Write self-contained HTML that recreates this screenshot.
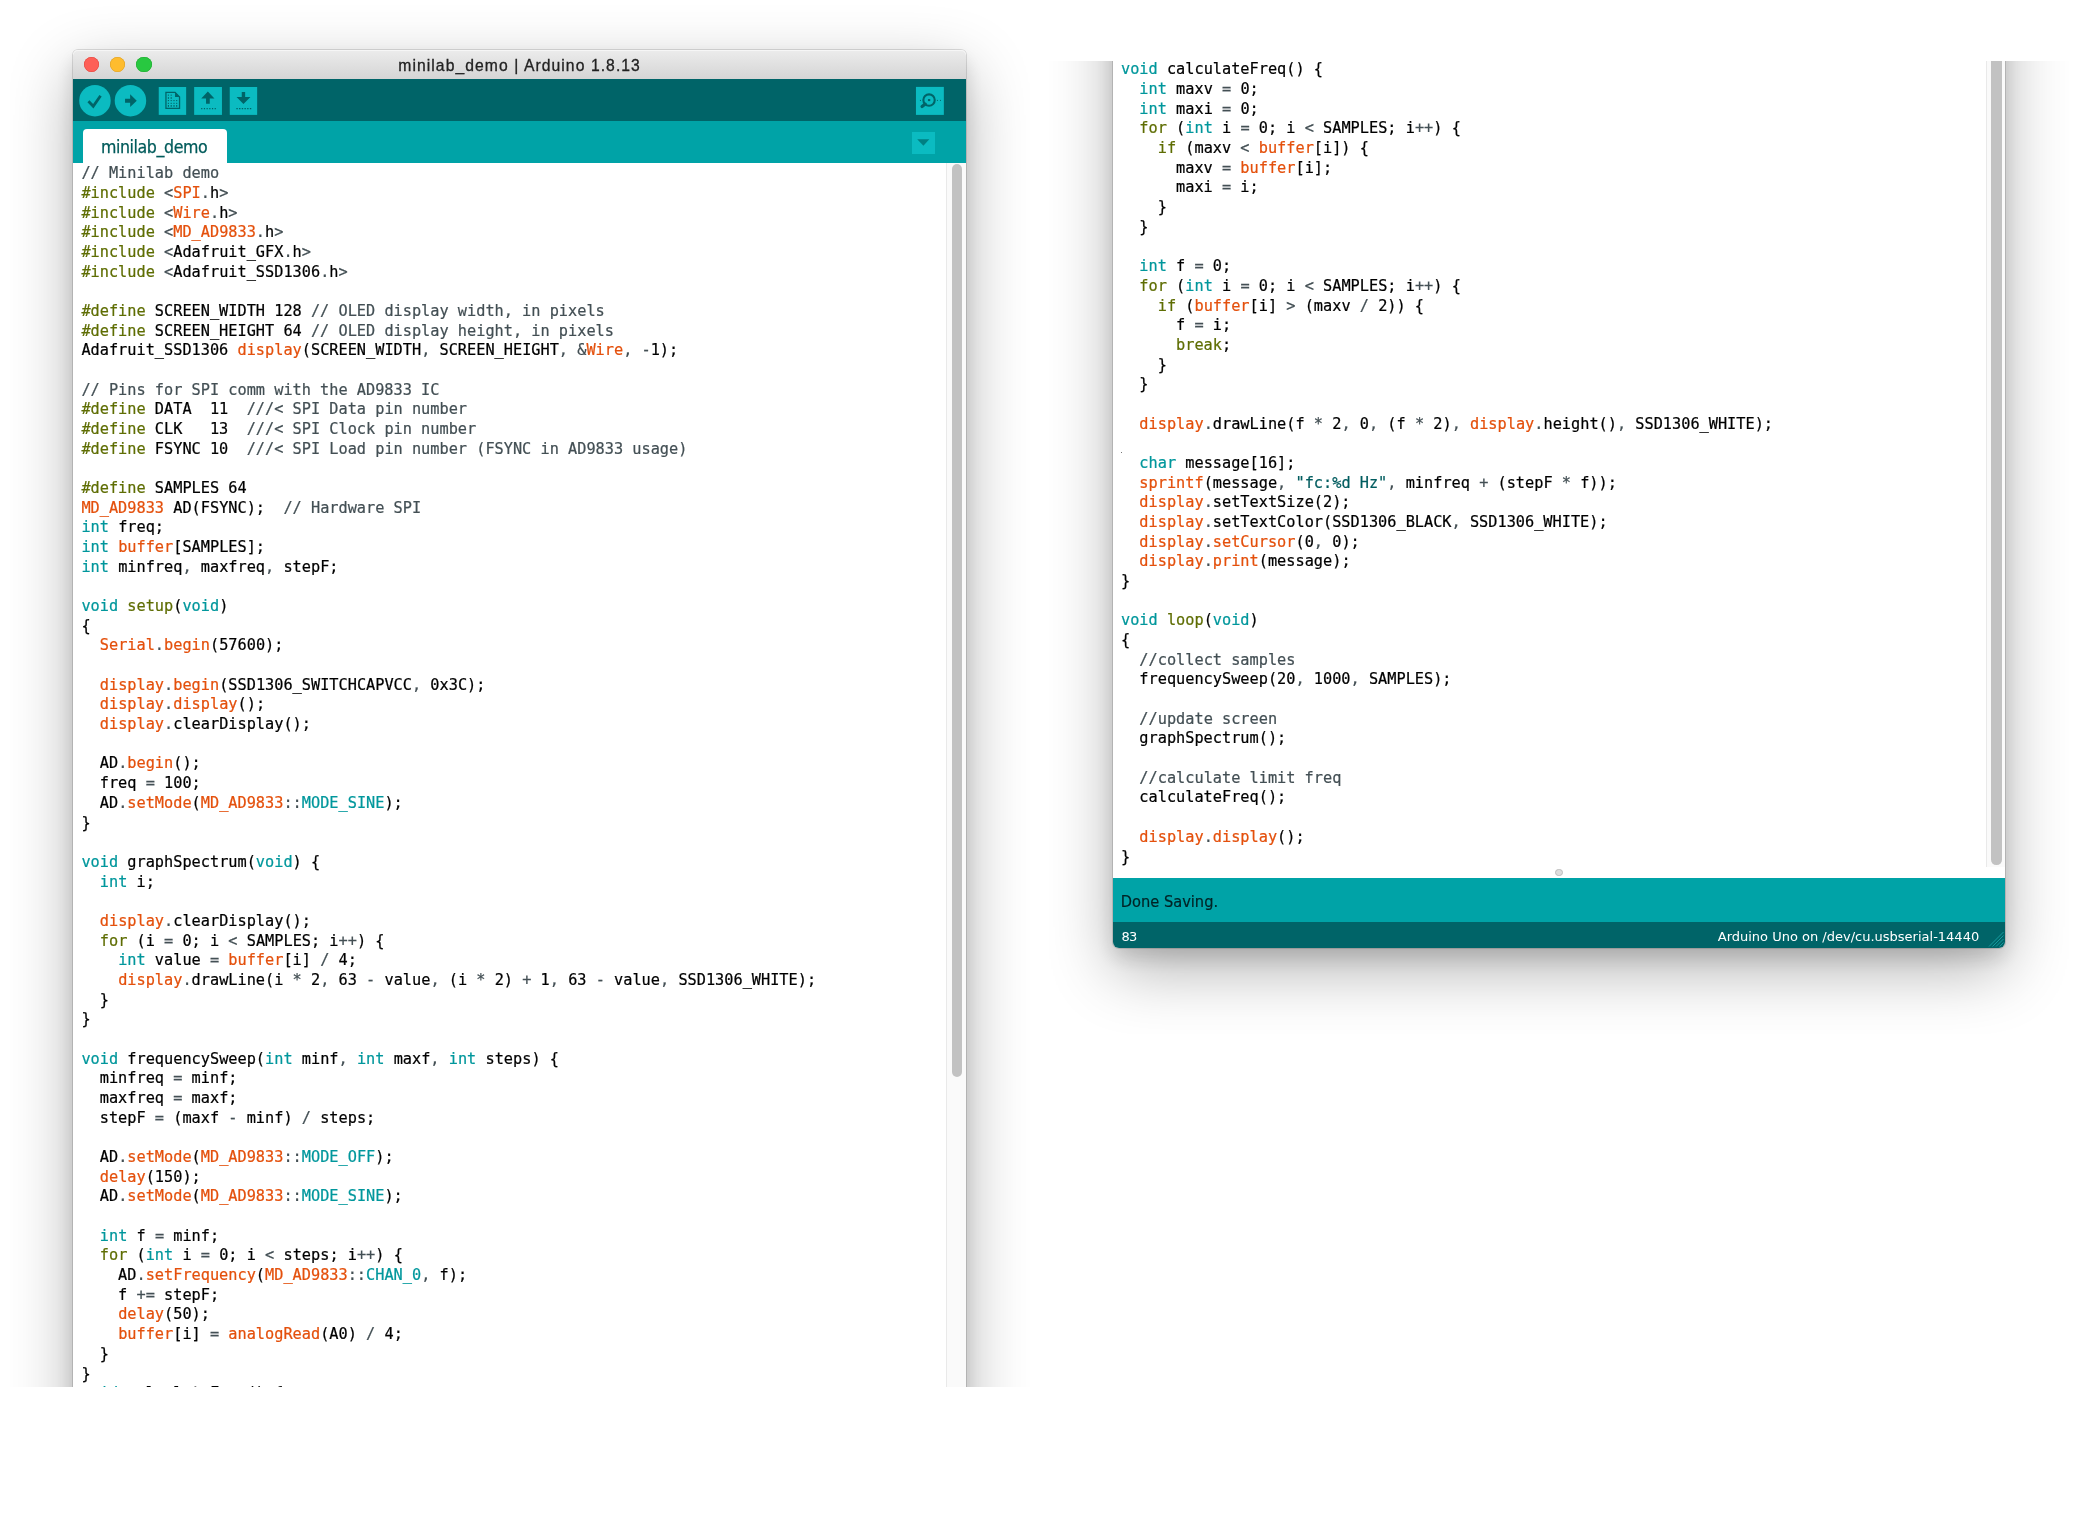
<!DOCTYPE html>
<html lang="en"><head><meta charset="utf-8"><title>minilab_demo | Arduino 1.8.13</title>
<style>
html,body{margin:0;padding:0;background:#fff}
body{width:2080px;height:1514px;position:relative;overflow:hidden;font-family:"Liberation Sans",sans-serif}
.img{position:absolute;overflow:hidden;will-change:transform}
.win{position:absolute;box-shadow:0 0 0 1px rgba(0,0,0,.13),0 10px 20px rgba(0,0,0,.13),0 22px 64px rgba(0,0,0,.30)}
.edbg{position:absolute;left:0;width:100%;background:#fff}
.abs{position:absolute}
.titlebar{position:absolute;left:0;top:0;width:100%;height:29.5px;border-radius:5px 5px 0 0;background:linear-gradient(#ececec,#d5d5d5);box-shadow:inset 0 1px 0 #f6f6f6}
.title{position:absolute;left:0;width:100%;text-align:center;top:6.4px;font-size:15.7px;letter-spacing:1.07px;line-height:20px;color:#222;white-space:pre;-webkit-text-stroke:.3px}
.dot{position:absolute;width:15.6px;height:15.6px;border-radius:50%;top:7.4px}
.toolbar{position:absolute;left:0;top:29.5px;width:100%;height:41.8px;background:#006468}
.tabbar{position:absolute;left:0;top:71.3px;width:100%;height:42.1px;background:#00a3a7}
.btn{position:absolute;background:#0bbbc1}
.tab{position:absolute;left:9.95px;top:8.3px;width:143.6px;height:40px;background:#fff;border-radius:4px 4px 0 0}
.tabtxt{position:absolute;left:-.7px;width:100%;text-align:center;top:7.7px;font-family:"DejaVu Sans Condensed","DejaVu Sans","Liberation Sans",sans-serif;font-size:17.6px;letter-spacing:-.4px;line-height:20px;color:#005b5b;white-space:pre;-webkit-text-stroke:.25px #005b5b}
.code{position:absolute;left:0;top:0;font-family:"DejaVu Sans Mono","Liberation Mono",monospace;font-size:15.265px;color:#000;-webkit-text-stroke:.22px}
.ln{position:absolute;white-space:pre;height:20px;line-height:20px}
.ln i{font-style:normal}
.c{color:#434f54}.g{color:#434f54}.p{color:#5e6d03}.o{color:#e4500c}.t{color:#00979c}.s{color:#005c5f}
.track{position:absolute;background:#fafafa;border-left:1px solid #e9e9e9;box-sizing:border-box}
.thumb{position:absolute;background:#c2c2c2;border-radius:5.2px}
.status{position:absolute;left:0;width:100%;background:#00a3a7}
.footer{position:absolute;left:0;width:100%;background:#006468;border-radius:0 0 5px 5px}
.sans{font-family:"DejaVu Sans Condensed","DejaVu Sans","Liberation Sans",sans-serif;white-space:pre;position:absolute}
.sans2{font-family:"DejaVu Sans","Liberation Sans",sans-serif;white-space:pre;position:absolute}

</style></head>
<body>
<!-- left screenshot -->
<div class="img" style="left:10px;top:0;width:1020px;height:1387px">
 <div class="win" style="left:63.05px;top:49.5px;width:893.1px;height:1600px;border-radius:5px">
  <div class="edbg" style="top:113px;height:1400px"></div>
  <div class="titlebar">
   <div class="dot" style="left:10.6px;background:#fe5f57;box-shadow:inset 0 0 0 .6px #e2463f"></div>
   <div class="dot" style="left:36.8px;background:#febc2e;box-shadow:inset 0 0 0 .6px #dfa023"></div>
   <div class="dot" style="left:63.1px;background:#28c840;box-shadow:inset 0 0 0 .6px #1fab2f"></div>
   <div class="title">minilab_demo | Arduino 1.8.13</div>
  </div>
  <div class="toolbar">
   <svg class="abs" style="left:0;top:0" width="893" height="42" viewBox="0 0 893 42">
    <g transform="translate(0.55 0)">
    <!-- verify -->
    <circle cx="21.4" cy="21.7" r="15.75" fill="#0bbbc1"/>
    <path d="M14.9 22.3 L19.7 27.3 L27 16.8" fill="none" stroke="#006468" stroke-width="2.8"/>
    <!-- upload -->
    <circle cx="56.9" cy="21.7" r="15.75" fill="#0bbbc1"/>
    <path d="M51.5 19.7 H56.6 V15.3 L63.2 21.7 L56.6 28.1 V23.7 H51.5 Z" fill="#006468"/>
    <!-- new -->
    <rect x="85.2" y="8" width="27.4" height="27.9" fill="#0bbbc1"/>
    <path d="M92.4 13.4 H101.5 L106 18 V29.3 H92.4 Z" fill="none" stroke="#006468" stroke-width="1.3"/>
    <path d="M101.5 13.4 L106 18 H101.5 Z" fill="#006468"/>
    <g fill="#006468">
     <rect x="94.3" y="15.6" width="1.1" height="1.1"/><rect x="97.1" y="15.6" width="1.1" height="1.1"/>
     <rect x="94.3" y="18.2" width="1.1" height="1.6"/><rect x="97.1" y="18.2" width="1.1" height="1.6"/>
     <rect x="94.3" y="21" width="1.1" height="1.1"/><rect x="97.1" y="21" width="1.1" height="1.1"/><rect x="99.9" y="21" width="1.1" height="1.1"/><rect x="102.6" y="21" width="1.1" height="1.1"/>
     <rect x="94.3" y="23.8" width="1.1" height="1.1"/><rect x="97.1" y="23.8" width="1.1" height="1.1"/><rect x="99.9" y="23.8" width="1.1" height="1.1"/><rect x="102.6" y="23.8" width="1.1" height="1.1"/>
     <rect x="94.3" y="26" width="1.1" height="1.8"/><rect x="97.1" y="26" width="1.1" height="1.8"/><rect x="99.9" y="26" width="1.1" height="1.8"/><rect x="102.6" y="26" width="1.1" height="1.8"/>
    </g>
    <!-- open -->
    <rect x="120.6" y="8" width="27.8" height="27.9" fill="#0bbbc1"/>
    <path d="M134.3 12.6 L140.9 19.4 H136.2 V24.8 H132.5 V19.4 H127.7 Z" fill="#006468"/>
    <path d="M127.6 29.6 H142.4" stroke="#006468" stroke-width="1.1" stroke-dasharray="1.2 1.5" fill="none"/>
    <!-- save -->
    <rect x="156.2" y="8" width="27.4" height="27.9" fill="#0bbbc1"/>
    <path d="M168.2 13 H171.6 V18 H176.9 L169.9 25 L163 18 H168.2 Z" fill="#006468"/>
    <path d="M162.8 29.6 H178" stroke="#006468" stroke-width="1.1" stroke-dasharray="1.4 1.3" fill="none"/>
    <!-- serial monitor -->
    <g transform="translate(-0.1 0)">
    <rect x="842.5" y="7.9" width="27.9" height="28" fill="#0bbbc1"/>
    <circle cx="855.6" cy="21.1" r="5.7" fill="none" stroke="#006468" stroke-width="2.1"/>
    <rect x="854.5" y="20.1" width="2.3" height="2" fill="#006468"/>
    <path d="M851.8 25.1 L848.6 27.6" stroke="#006468" stroke-width="3.2" stroke-linecap="round" fill="none"/>
    <g fill="#006468"><rect x="846.5" y="20.9" width="1" height="1"/><rect x="863.5" y="20.9" width="1" height="1"/><rect x="866.5" y="20.9" width="1" height="1"/></g>
    </g>
    </g>
   </svg>
  </div>
  <div class="tabbar">
   <div class="tab"><div class="tabtxt">minilab_demo</div></div>
   <div class="btn" style="left:839.05px;top:11.2px;width:22.5px;height:22px"></div>
   <svg class="abs" style="left:839.05px;top:11.2px" width="23" height="22" viewBox="0 0 23 22"><path d="M5.2 7.3 H17.3 L11.4 13.8 Z" fill="#007f82"/></svg>
  </div>
  <div class="track" style="left:872.85px;top:113.4px;width:20.25px;height:1500px"></div>
  <div class="thumb" style="left:878.65px;top:114.7px;width:10.3px;height:912.8px"></div>
  <div class="code">
<div class="ln" style="top:113.65px;left:8.35px"><i class="c">// Minilab demo</i></div>
<div class="ln" style="top:133.33px;left:8.35px"><i class="p">#include </i><i class="g">&lt;</i><i class="o">SPI</i><i class="g">.</i>h<i class="g">&gt;</i></div>
<div class="ln" style="top:153.01px;left:8.35px"><i class="p">#include </i><i class="g">&lt;</i><i class="o">Wire</i><i class="g">.</i>h<i class="g">&gt;</i></div>
<div class="ln" style="top:172.68px;left:8.35px"><i class="p">#include </i><i class="g">&lt;</i><i class="o">MD_AD9833</i><i class="g">.</i>h<i class="g">&gt;</i></div>
<div class="ln" style="top:192.36px;left:8.35px"><i class="p">#include </i><i class="g">&lt;</i>Adafruit_GFX<i class="g">.</i>h<i class="g">&gt;</i></div>
<div class="ln" style="top:212.04px;left:8.35px"><i class="p">#include </i><i class="g">&lt;</i>Adafruit_SSD1306<i class="g">.</i>h<i class="g">&gt;</i></div>
<div class="ln" style="top:251.40px;left:8.35px"><i class="p">#define </i>SCREEN_WIDTH 128 <i class="c">// OLED display width, in pixels</i></div>
<div class="ln" style="top:271.07px;left:8.35px"><i class="p">#define </i>SCREEN_HEIGHT 64 <i class="c">// OLED display height, in pixels</i></div>
<div class="ln" style="top:290.75px;left:8.35px">Adafruit_SSD1306 <i class="o">display</i>(SCREEN_WIDTH<i class="g">, </i>SCREEN_HEIGHT<i class="g">, &amp;</i><i class="o">Wire</i><i class="g">, -</i>1);</div>
<div class="ln" style="top:330.11px;left:8.35px"><i class="c">// Pins for SPI comm with the AD9833 IC</i></div>
<div class="ln" style="top:349.79px;left:8.35px"><i class="p">#define </i>DATA  11  <i class="c">///&lt; SPI Data pin number</i></div>
<div class="ln" style="top:369.46px;left:8.35px"><i class="p">#define </i>CLK   13  <i class="c">///&lt; SPI Clock pin number</i></div>
<div class="ln" style="top:389.14px;left:8.35px"><i class="p">#define </i>FSYNC 10  <i class="c">///&lt; SPI Load pin number (FSYNC in AD9833 usage)</i></div>
<div class="ln" style="top:428.50px;left:8.35px"><i class="p">#define </i>SAMPLES 64</div>
<div class="ln" style="top:448.18px;left:8.35px"><i class="o">MD_AD9833 </i>AD(FSYNC);  <i class="c">// Hardware SPI</i></div>
<div class="ln" style="top:467.85px;left:8.35px"><i class="t">int </i>freq;</div>
<div class="ln" style="top:487.53px;left:8.35px"><i class="t">int </i><i class="o">buffer</i>[SAMPLES];</div>
<div class="ln" style="top:507.21px;left:8.35px"><i class="t">int </i>minfreq<i class="g">, </i>maxfreq<i class="g">, </i>stepF;</div>
<div class="ln" style="top:546.57px;left:8.35px"><i class="t">void </i><i class="p">setup</i>(<i class="t">void</i>)</div>
<div class="ln" style="top:566.24px;left:8.35px">{</div>
<div class="ln" style="top:585.92px;left:8.35px">  <i class="o">Serial</i><i class="g">.</i><i class="o">begin</i>(57600);</div>
<div class="ln" style="top:625.28px;left:8.35px">  <i class="o">display</i><i class="g">.</i><i class="o">begin</i>(SSD1306_SWITCHCAPVCC<i class="g">, </i>0x3C);</div>
<div class="ln" style="top:644.96px;left:8.35px">  <i class="o">display</i><i class="g">.</i><i class="o">display</i>();</div>
<div class="ln" style="top:664.63px;left:8.35px">  <i class="o">display</i><i class="g">.</i>clearDisplay();</div>
<div class="ln" style="top:703.99px;left:8.35px">  AD<i class="g">.</i><i class="o">begin</i>();</div>
<div class="ln" style="top:723.67px;left:8.35px">  freq <i class="g">= </i>100;</div>
<div class="ln" style="top:743.35px;left:8.35px">  AD<i class="g">.</i><i class="o">setMode</i>(<i class="o">MD_AD9833</i><i class="g">::</i><i class="t">MODE_SINE</i>);</div>
<div class="ln" style="top:763.02px;left:8.35px">}</div>
<div class="ln" style="top:802.38px;left:8.35px"><i class="t">void </i>graphSpectrum(<i class="t">void</i>) {</div>
<div class="ln" style="top:822.06px;left:8.35px">  <i class="t">int </i>i;</div>
<div class="ln" style="top:861.41px;left:8.35px">  <i class="o">display</i><i class="g">.</i>clearDisplay();</div>
<div class="ln" style="top:881.09px;left:8.35px">  <i class="p">for </i>(i <i class="g">= </i>0; i <i class="g">&lt; </i>SAMPLES; i<i class="g">++</i>) {</div>
<div class="ln" style="top:900.77px;left:8.35px">    <i class="t">int </i>value <i class="g">= </i><i class="o">buffer</i>[i] <i class="g">/ </i>4;</div>
<div class="ln" style="top:920.45px;left:8.35px">    <i class="o">display</i><i class="g">.</i>drawLine(i <i class="g">* </i>2<i class="g">, </i>63 <i class="g">- </i>value<i class="g">, </i>(i <i class="g">* </i>2) <i class="g">+ </i>1<i class="g">, </i>63 <i class="g">- </i>value<i class="g">, </i>SSD1306_WHITE);</div>
<div class="ln" style="top:940.13px;left:8.35px">  }</div>
<div class="ln" style="top:959.80px;left:8.35px">}</div>
<div class="ln" style="top:999.16px;left:8.35px"><i class="t">void </i>frequencySweep(<i class="t">int </i>minf<i class="g">, </i><i class="t">int </i>maxf<i class="g">, </i><i class="t">int </i>steps) {</div>
<div class="ln" style="top:1018.84px;left:8.35px">  minfreq <i class="g">= </i>minf;</div>
<div class="ln" style="top:1038.52px;left:8.35px">  maxfreq <i class="g">= </i>maxf;</div>
<div class="ln" style="top:1058.19px;left:8.35px">  stepF <i class="g">= </i>(maxf <i class="g">- </i>minf) <i class="g">/ </i>steps;</div>
<div class="ln" style="top:1097.55px;left:8.35px">  AD<i class="g">.</i><i class="o">setMode</i>(<i class="o">MD_AD9833</i><i class="g">::</i><i class="t">MODE_OFF</i>);</div>
<div class="ln" style="top:1117.23px;left:8.35px">  <i class="o">delay</i>(150);</div>
<div class="ln" style="top:1136.91px;left:8.35px">  AD<i class="g">.</i><i class="o">setMode</i>(<i class="o">MD_AD9833</i><i class="g">::</i><i class="t">MODE_SINE</i>);</div>
<div class="ln" style="top:1176.26px;left:8.35px">  <i class="t">int </i>f <i class="g">= </i>minf;</div>
<div class="ln" style="top:1195.94px;left:8.35px">  <i class="p">for </i>(<i class="t">int </i>i <i class="g">= </i>0; i <i class="g">&lt; </i>steps; i<i class="g">++</i>) {</div>
<div class="ln" style="top:1215.62px;left:8.35px">    AD<i class="g">.</i><i class="o">setFrequency</i>(<i class="o">MD_AD9833</i><i class="g">::</i><i class="t">CHAN_0</i><i class="g">, </i>f);</div>
<div class="ln" style="top:1235.30px;left:8.35px">    f <i class="g">+= </i>stepF;</div>
<div class="ln" style="top:1254.97px;left:8.35px">    <i class="o">delay</i>(50);</div>
<div class="ln" style="top:1274.65px;left:8.35px">    <i class="o">buffer</i>[i] <i class="g">= </i><i class="o">analogRead</i>(A0) <i class="g">/ </i>4;</div>
<div class="ln" style="top:1294.33px;left:8.35px">  }</div>
<div class="ln" style="top:1314.01px;left:8.35px">}</div>
<div class="ln" style="top:1333.69px;left:8.35px"><i class="t">void </i>calculateFreq() {</div>
  </div>
 </div>
</div>
<!-- right screenshot -->
<div class="img" style="left:1049px;top:61px;width:1020px;height:973px">
 <div class="win" style="left:63.8px;top:-600px;width:892.7px;height:1487.2px;border-radius:5px 5px 6px 6px">
  <div class="edbg" style="top:0;height:1417.5px"></div>
  <div class="track" style="left:873.2px;top:0;width:19.5px;height:1405.6px"></div>
  <div class="thumb" style="left:878.4px;top:100px;width:10.4px;height:1304px"></div>
  <div class="code">
<div class="ln" style="top:598.40px;left:8.20px"><i class="t">void </i>calculateFreq() {</div>
<div class="ln" style="top:618.08px;left:8.20px">  <i class="t">int </i>maxv <i class="g">= </i>0;</div>
<div class="ln" style="top:637.76px;left:8.20px">  <i class="t">int </i>maxi <i class="g">= </i>0;</div>
<div class="ln" style="top:657.43px;left:8.20px">  <i class="p">for </i>(<i class="t">int </i>i <i class="g">= </i>0; i <i class="g">&lt; </i>SAMPLES; i<i class="g">++</i>) {</div>
<div class="ln" style="top:677.11px;left:8.20px">    <i class="p">if </i>(maxv <i class="g">&lt; </i><i class="o">buffer</i>[i]) {</div>
<div class="ln" style="top:696.79px;left:8.20px">      maxv <i class="g">= </i><i class="o">buffer</i>[i];</div>
<div class="ln" style="top:716.47px;left:8.20px">      maxi <i class="g">= </i>i;</div>
<div class="ln" style="top:736.15px;left:8.20px">    }</div>
<div class="ln" style="top:755.82px;left:8.20px">  }</div>
<div class="ln" style="top:795.18px;left:8.20px">  <i class="t">int </i>f <i class="g">= </i>0;</div>
<div class="ln" style="top:814.86px;left:8.20px">  <i class="p">for </i>(<i class="t">int </i>i <i class="g">= </i>0; i <i class="g">&lt; </i>SAMPLES; i<i class="g">++</i>) {</div>
<div class="ln" style="top:834.54px;left:8.20px">    <i class="p">if </i>(<i class="o">buffer</i>[i] <i class="g">&gt; </i>(maxv <i class="g">/ </i>2)) {</div>
<div class="ln" style="top:854.21px;left:8.20px">      f <i class="g">= </i>i;</div>
<div class="ln" style="top:873.89px;left:8.20px">      <i class="p">break</i>;</div>
<div class="ln" style="top:893.57px;left:8.20px">    }</div>
<div class="ln" style="top:913.25px;left:8.20px">  }</div>
<div class="ln" style="top:952.60px;left:8.20px">  <i class="o">display</i><i class="g">.</i>drawLine(f <i class="g">* </i>2<i class="g">, </i>0<i class="g">, </i>(f <i class="g">* </i>2)<i class="g">, </i><i class="o">display</i><i class="g">.</i>height()<i class="g">, </i>SSD1306_WHITE);</div>
<div class="ln" style="top:991.96px;left:8.20px">  <i class="t">char </i>message[16];</div>
<div class="ln" style="top:1011.64px;left:8.20px">  <i class="o">sprintf</i>(message<i class="g">, </i><i class="s">"fc:%d Hz"</i><i class="g">, </i>minfreq <i class="g">+ </i>(stepF <i class="g">* </i>f));</div>
<div class="ln" style="top:1031.32px;left:8.20px">  <i class="o">display</i><i class="g">.</i>setTextSize(2);</div>
<div class="ln" style="top:1050.99px;left:8.20px">  <i class="o">display</i><i class="g">.</i>setTextColor(SSD1306_BLACK<i class="g">, </i>SSD1306_WHITE);</div>
<div class="ln" style="top:1070.67px;left:8.20px">  <i class="o">display</i><i class="g">.</i><i class="o">setCursor</i>(0<i class="g">, </i>0);</div>
<div class="ln" style="top:1090.35px;left:8.20px">  <i class="o">display</i><i class="g">.</i><i class="o">print</i>(message);</div>
<div class="ln" style="top:1110.03px;left:8.20px">}</div>
<div class="ln" style="top:1149.38px;left:8.20px"><i class="t">void </i><i class="p">loop</i>(<i class="t">void</i>)</div>
<div class="ln" style="top:1169.06px;left:8.20px">{</div>
<div class="ln" style="top:1188.74px;left:8.20px">  <i class="c">//collect samples</i></div>
<div class="ln" style="top:1208.42px;left:8.20px">  frequencySweep(20<i class="g">, </i>1000<i class="g">, </i>SAMPLES);</div>
<div class="ln" style="top:1247.77px;left:8.20px">  <i class="c">//update screen</i></div>
<div class="ln" style="top:1267.45px;left:8.20px">  graphSpectrum();</div>
<div class="ln" style="top:1306.81px;left:8.20px">  <i class="c">//calculate limit freq</i></div>
<div class="ln" style="top:1326.49px;left:8.20px">  calculateFreq();</div>
<div class="ln" style="top:1365.84px;left:8.20px">  <i class="o">display</i><i class="g">.</i><i class="o">display</i>();</div>
<div class="ln" style="top:1385.52px;left:8.20px">}</div>
  </div>
  <div class="abs" style="left:442.4px;top:1407.6px;width:7.6px;height:7.6px;border-radius:50%;background:#dddddd;border:1.2px solid #bcbcbc;box-sizing:border-box"></div>
  <div class="abs" style="left:8.2px;top:990.6px;width:1.3px;height:1.3px;background:#777"></div>
  <div class="status" style="top:1416.8px;height:44.4px">
   <div class="sans" style="left:8px;top:14.2px;font-size:16.25px;line-height:20px;color:#002325;-webkit-text-stroke:.2px">Done Saving.</div>
  </div>
  <div class="footer" style="top:1461px;height:26.2px;border-radius:0 0 6px 6px">
   <div class="sans2" style="left:8.6px;top:7.2px;font-size:13px;letter-spacing:-.6px;line-height:16px;color:#fff">83</div>
   <div class="sans2" style="right:26.3px;top:7.2px;font-size:13px;line-height:16px;color:#fff">Arduino Uno on /dev/cu.usbserial-14440</div>
   <svg class="abs" style="right:1px;bottom:1px" width="16" height="16" viewBox="0 0 16 16"><path d="M15.5 1 L1 15.5 M15.5 4.5 L4.5 15.5 M15.5 8 L8 15.5 M15.5 11.5 L11.5 15.5" stroke="#17a1a5" stroke-width=".9" fill="none"/></svg>
  </div>
 </div>
</div>
</body></html>
